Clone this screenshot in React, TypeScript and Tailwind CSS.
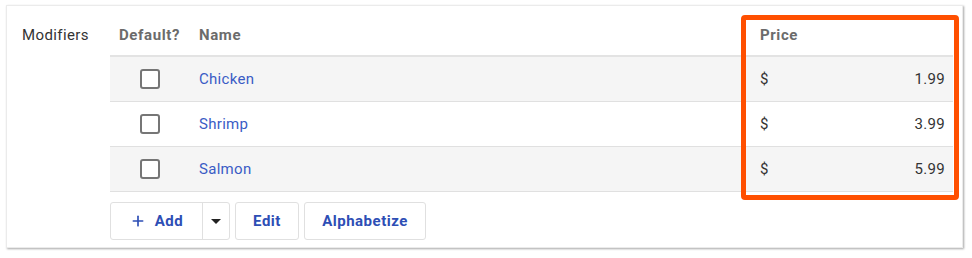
import { Plus } from 'lucide-react';

const modifiers = [
  { name: 'Chicken', price: '1.99' },
  { name: 'Shrimp', price: '3.99' },
  { name: 'Salmon', price: '5.99' },
];

export default function App() {
  return (
    <div className="w-[972px] h-[258px] bg-white pl-[6px] pt-[5px] font-['Roboto',sans-serif]">
      <div className="relative w-[957px] h-[243px] bg-white border border-[#ebebeb] shadow-[1px_1px_2px_rgba(0,0,0,0.35)] flex pt-[10px] pl-[15px]">
        {/* Label */}
        <div className="w-[88px] h-[39px] flex items-center text-[15px] tracking-[0.4px] text-[#333]">
          Modifiers
        </div>

        {/* Table */}
        <div className="w-[843px] flex flex-col">
          <div className="grid grid-cols-[80px_561px_1fr] h-[41px] border-b-2 border-[#e3e3e3] text-[15px] tracking-[0.6px] font-bold text-[#6b6b6b] items-center">
            <div className="pl-[9px]">Default?</div>
            <div className="pl-[9px]">Name</div>
            <div className="pl-[9px]">Price</div>
          </div>

          {modifiers.map((m, i) => (
            <div
              key={m.name}
              className={`grid grid-cols-[80px_561px_1fr] h-[45px] border-b border-[#e0e0e0] items-center text-[15px] tracking-[0.3px] ${
                i % 2 === 0 ? 'bg-[#f5f5f5]' : 'bg-white'
              }`}
            >
              <div className="flex justify-center">
                <div className="w-[20px] h-[20px] border-2 border-[#767676] rounded-[3px] bg-white" />
              </div>
              <div className="pl-[9px] text-[#3a5cc5]">{m.name}</div>
              <div className="pl-[9px] pr-[8px] flex justify-between text-[#333]">
                <span>$</span>
                <span>{m.price}</span>
              </div>
            </div>
          ))}

          {/* Actions */}
          <div className="flex gap-[5px] mt-[10px] text-[15px] tracking-[0.5px] font-bold text-[#2d4eb5]">
            <div className="flex h-[38px] border border-[#e0e0e0] rounded-[3px]">
              <div className="w-[92px] flex items-center justify-center gap-[9px] border-r border-[#e0e0e0]">
                <Plus className="w-[16px] h-[16px]" strokeWidth={2.5} />
                <span>Add</span>
              </div>
              <div className="w-[26px] flex items-center justify-center">
                <div className="w-0 h-0 border-l-[5px] border-r-[5px] border-t-[5px] border-l-transparent border-r-transparent border-t-[#222]" />
              </div>
            </div>
            <div className="w-[64px] h-[38px] border border-[#e0e0e0] rounded-[3px] flex items-center justify-center">
              Edit
            </div>
            <div className="w-[122px] h-[38px] border border-[#e0e0e0] rounded-[3px] flex items-center justify-center">
              Alphabetize
            </div>
          </div>
        </div>

        {/* Highlight overlay */}
        <div className="absolute left-[734px] top-[9px] w-[218px] h-[185px] border-[5px] border-[#ff4f00] rounded-[4px] pointer-events-none" />
      </div>
    </div>
  );
}
